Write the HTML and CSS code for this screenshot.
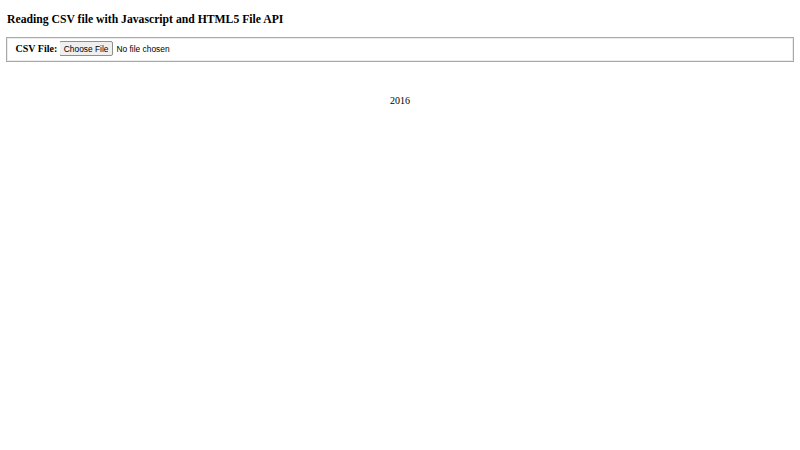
FILE: index.html
```html
<!DOCTYPE html>
<html>
<head>
<meta charset="utf-8">
<title>Reading CSV</title>
<link rel="stylesheet" href="styles.css">
</head>
<body class="page">
<h3 class="title">Reading CSV file with Javascript and HTML5 File API</h3>
<fieldset class="box">
  <label class="lbl" for="csv">CSV File:</label>
  <input type="file" id="csv" class="file">
</fieldset>
<div class="output"></div>
<footer class="foot">2016</footer>
</body>
</html>
```
FILE: styles.css
```css
html { background: #fff; }
.page {
  margin: 0 5px;
  padding-top: 0.1px;
  font-family: "Liberation Serif", "Times New Roman", serif;
  font-size: 10px;
  color: #000;
}
.title {
  font-size: 11.7px;
  font-weight: bold;
  margin: 13px 0 10.5px 2px;
}
.box {
  margin: 0 1px;
  padding: 3.5px 7.5px 5px 8.5px;
  border: 1px solid #a8a8a8;
  box-shadow: inset 0 0 0 1px #ececec;
  min-width: 0;
}
.lbl { font-weight: bold; }
.file {
  font-family: "Liberation Sans", Arial, sans-serif;
  font-size: 8.4px;
  color: #000;
}
.file::file-selector-button {
  font-family: "Liberation Sans", Arial, sans-serif;
  font-size: 8.4px;
  padding: 1.5px 4px;
  margin-right: 3px;
  margin-left: -1px;
  border: 1px solid #8f8f8f;
  border-radius: 2px;
  background: #efefef;
  color: #000;
}
.output { height: 0; }
.foot { text-align: center; margin-top: 33px; }
```
